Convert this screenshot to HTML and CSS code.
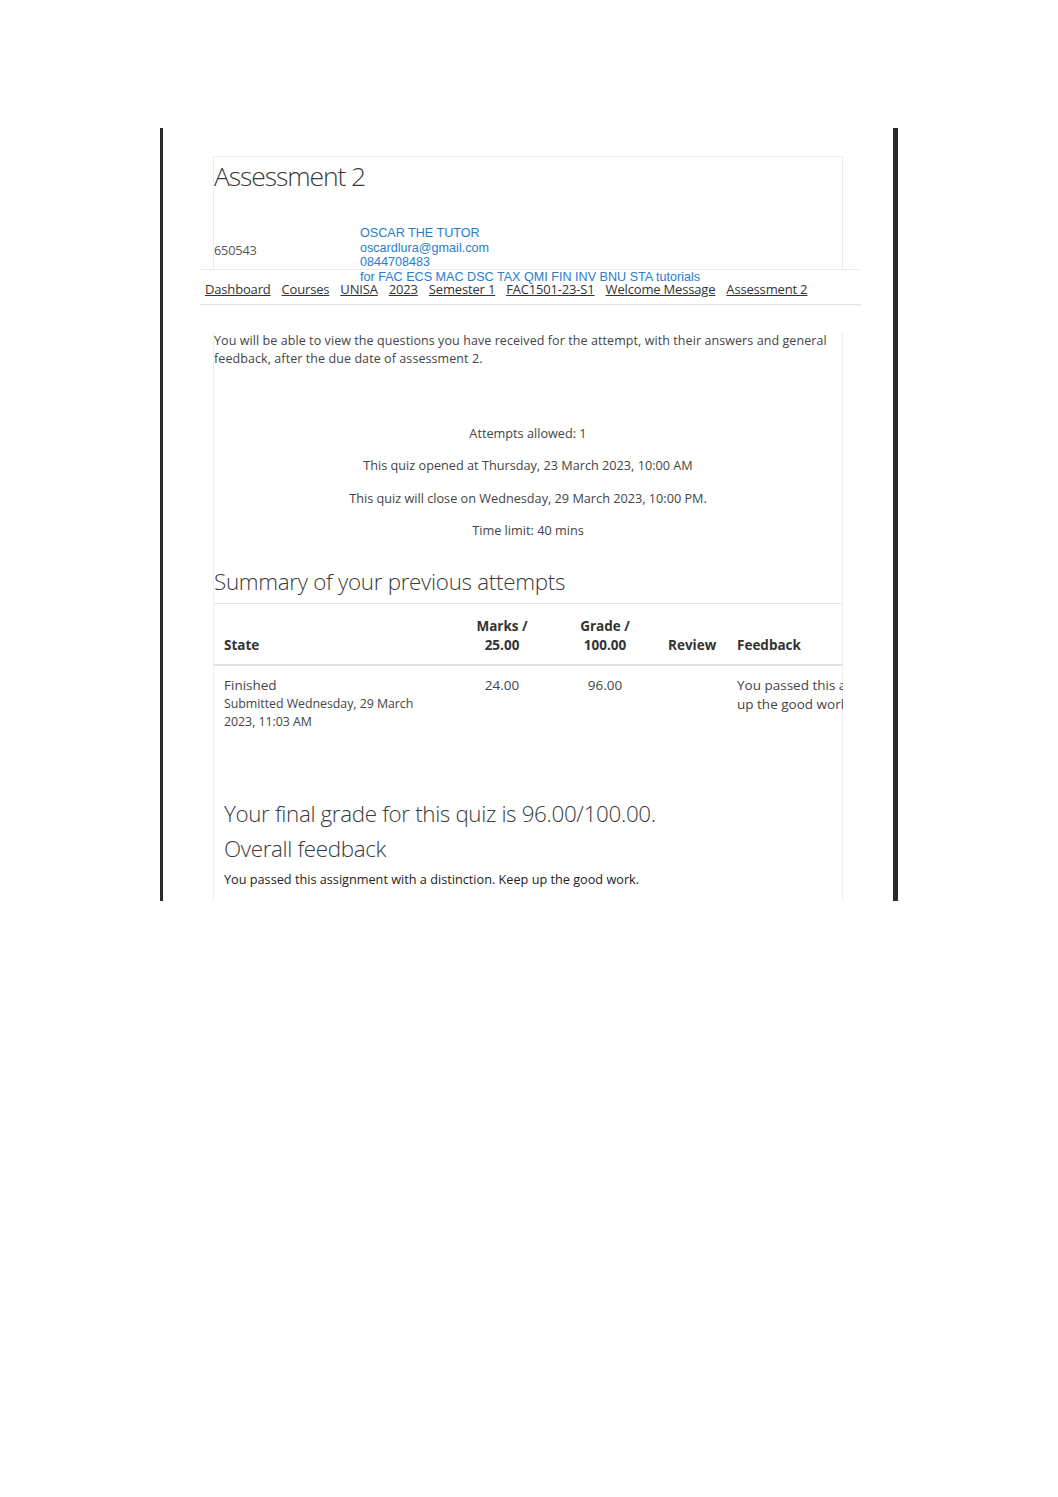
FILE: index.html
```html
<!DOCTYPE html>
<html lang="en">
<head>
<meta charset="utf-8">
<title>Assessment 2</title>
<link rel="stylesheet" href="styles.css">
</head>
<body>
<div class="frame">
  <div class="head-card">
    <h1 class="title">Assessment 2</h1>
    <div class="idnum">650543</div>
    <div class="stamp">OSCAR THE TUTOR<br>oscardlura@gmail.com<br>0844708483<br>for FAC ECS MAC DSC TAX QMI FIN INV BNU STA tutorials</div>
  </div>
  <nav class="crumbs">
    <a href="#">Dashboard</a>
    <a href="#">Courses</a>
    <a href="#">UNISA</a>
    <a href="#">2023</a>
    <a href="#">Semester 1</a>
    <a href="#">FAC1501-23-S1</a>
    <a href="#">Welcome Message</a>
    <a href="#">Assessment 2</a>
  </nav>
  <div class="main-card">
    <p class="notice">You will be able to view the questions you have received for the attempt, with their answers and general feedback, after the due date of assessment 2.</p>
    <div class="info">
      <p>Attempts allowed: 1</p>
      <p>This quiz opened at Thursday, 23 March 2023, 10:00 AM</p>
      <p>This quiz will close on Wednesday, 29 March 2023, 10:00 PM.</p>
      <p>Time limit: 40 mins</p>
    </div>
    <h2 class="summary-title">Summary of your previous attempts</h2>
    <div class="table-wrap">
      <table class="attempts">
        <thead>
          <tr>
            <th class="c-state">State</th>
            <th class="c-marks">Marks /<br>25.00</th>
            <th class="c-grade">Grade /<br>100.00</th>
            <th class="c-review">Review</th>
            <th class="c-fb">Feedback</th>
          </tr>
        </thead>
        <tbody>
          <tr>
            <td class="c-state">Finished<span class="sub">Submitted Wednesday, 29 March 2023, 11:03 AM</span></td>
            <td class="c-marks">24.00</td>
            <td class="c-grade">96.00</td>
            <td class="c-review"></td>
            <td class="c-fb">You passed this assignment with a distinction. Keep up the good work.</td>
          </tr>
        </tbody>
      </table>
    </div>
    <h3 class="final">Your final grade for this quiz is 96.00/100.00.</h3>
    <h3 class="overall">Overall feedback</h3>
    <p class="fb">You passed this assignment with a distinction. Keep up the good work.</p>
  </div>
</div>
</body>
</html>
```

FILE: styles.css
```css
html, body {
  margin: 0;
  padding: 0;
  background: #ffffff;
}
body {
  font-family: "Open Sans", "Noto Sans", sans-serif;
  color: #444;
}
.frame {
  margin: 128px 0 0 160px;
  width: 730px;
  height: 745px;
  border-left: 3px solid #2a2a2a;
  border-right: 5px solid #2a2a2a;
  overflow: hidden;
  padding-top: 28px;
  box-sizing: content-box;
}
.head-card {
  position: relative;
  margin-left: 50px;
  width: 630px;
  height: 113px;
  border: 1px solid #ececec;
  border-bottom: none;
  box-sizing: border-box;
}
.title {
  margin: 2px 0 0 0;
  font-weight: 300;
  font-size: 26.5px;
  line-height: 34px;
  color: #3a3a3a;
  letter-spacing: -1.1px;
}
.idnum {
  margin-top: 49px;
  font-size: 12.8px;
  line-height: 16px;
  color: #555;
  letter-spacing: -0.2px;
}
.stamp {
  position: absolute;
  z-index: 2;
  left: 146px;
  top: 69px;
  font-family: "Liberation Sans", Arial, sans-serif;
  font-size: 12.6px;
  line-height: 14.5px;
  color: #2a7ccc;
}
.crumbs {
  position: relative;
  z-index: 1;
  margin-left: 37px;
  width: 661px;
  height: 36px;
  box-sizing: border-box;
  border-top: 1px solid #ececec;
  border-bottom: 1px solid #e4e4e4;
  box-shadow: 0 1px 2px rgba(0,0,0,0.04);
  display: flex;
  align-items: flex-end;
  padding: 0 0 7px 5px;
  gap: 11px;
  font-size: 13px;
  letter-spacing: -0.17px;
}
.crumbs a {
  color: #333;
  text-decoration: underline;
  line-height: 16px;
}
.main-card {
  margin: 7px 0 0 50px;
  width: 630px;
  border-left: 1px solid #efefef;
  border-right: 1px solid #efefef;
  box-sizing: border-box;
  min-height: 600px;
}
.notice {
  margin: 27px 0 0 0;
  font-size: 12.5px;
  line-height: 18px;
  color: #444;
  letter-spacing: 0.08px;
  padding-right: 4px;
}
.info {
  margin-top: 56px;
  text-align: center;
  font-size: 12.7px;
  color: #444;
  letter-spacing: 0;
}
.info p {
  margin: 0 0 14.3px 0;
  line-height: 18px;
}
.summary-title {
  margin: 28px 0 0 0;
  font-weight: 300;
  font-size: 22.4px;
  line-height: 30px;
  color: #3a3a3a;
  letter-spacing: -0.3px;
}
.table-wrap {
  margin-top: 6px;
  width: 629px;
  overflow: hidden;
  border-top: 1px solid #e6e6e6;
}
.attempts {
  border-collapse: collapse;
  table-layout: fixed;
  width: 850px;
  font-size: 13.5px;
  letter-spacing: 0;
}
.attempts th {
  font-weight: 700;
  color: #333;
  line-height: 19px;
  padding: 13px 10px 9px 10px;
  vertical-align: bottom;
  border-bottom: 2px solid #e2e2e2;
  text-align: left;
}
.attempts td {
  vertical-align: top;
  padding: 10px 10px 10px 10px;
  line-height: 19px;
  color: #444;
}
.attempts .c-state { width: 198px; padding-right: 30px; }
.attempts .c-marks { width: 80px; text-align: center; }
.attempts .c-grade { width: 86px; text-align: center; }
.attempts .c-review { width: 49px; }
.attempts .c-fb { width: 340px; }
.attempts .sub {
  display: block;
  font-size: 12.4px;
  line-height: 18px;
  margin-top: 0;
  letter-spacing: -0.05px;
}
.final {
  margin: 58px 0 0 10px;
  font-weight: 300;
  font-size: 22.4px;
  line-height: 30px;
  color: #3a3a3a;
  letter-spacing: -0.35px;
}
.overall {
  margin: 5px 0 0 10px;
  font-weight: 300;
  font-size: 22.4px;
  line-height: 30px;
  color: #3a3a3a;
  letter-spacing: -0.35px;
}
.fb {
  margin: 7px 0 0 10px;
  font-size: 12.7px;
  line-height: 16px;
  color: #222;
  letter-spacing: 0;
}
```
